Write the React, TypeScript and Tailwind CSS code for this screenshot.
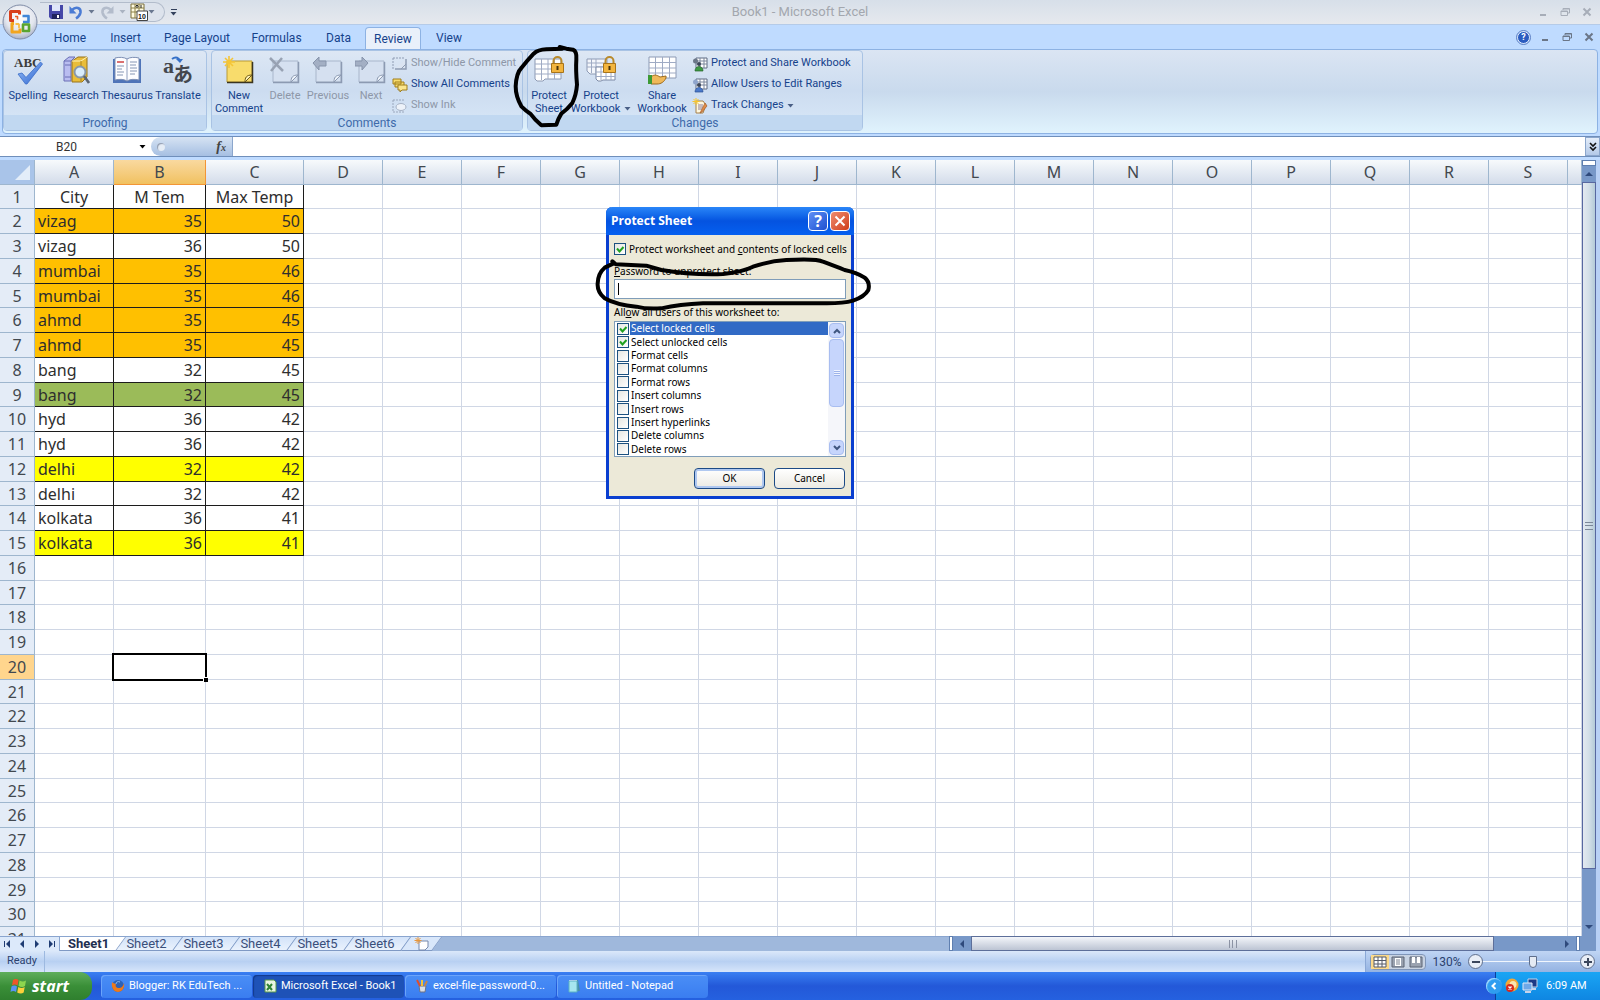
import type { ReactNode } from "react";
import clsx from "clsx";

const ribbonTabs = [
  { label: "Home", width: "w-14" },
  { label: "Insert", width: "w-[55px]" },
  { label: "Page Layout", width: "w-[88px]" },
  { label: "Formulas", width: "w-[71px]" },
  { label: "Data", width: "w-[53px]" },
  { label: "Review", width: "w-14", active: true },
  { label: "View", width: "w-14" },
];

const columns = "ABCDEFGHIJKLMNOPQRST".split("");

const records = [
  { city: "vizag", min: 35, max: 50, fill: "bg-[#ffc000]" },
  { city: "vizag", min: 36, max: 50, fill: "bg-white" },
  { city: "mumbai", min: 35, max: 46, fill: "bg-[#ffc000]" },
  { city: "mumbai", min: 35, max: 46, fill: "bg-[#ffc000]" },
  { city: "ahmd", min: 35, max: 45, fill: "bg-[#ffc000]" },
  { city: "ahmd", min: 35, max: 45, fill: "bg-[#ffc000]" },
  { city: "bang", min: 32, max: 45, fill: "bg-white" },
  { city: "bang", min: 32, max: 45, fill: "bg-[#9bbb59]" },
  { city: "hyd", min: 36, max: 42, fill: "bg-white" },
  { city: "hyd", min: 36, max: 42, fill: "bg-white" },
  { city: "delhi", min: 32, max: 42, fill: "bg-[#ffff00]" },
  { city: "delhi", min: 32, max: 42, fill: "bg-white" },
  { city: "kolkata", min: 36, max: 41, fill: "bg-white" },
  { city: "kolkata", min: 36, max: 41, fill: "bg-[#ffff00]" },
];

const permissions = [
  "Select locked cells",
  "Select unlocked cells",
  "Format cells",
  "Format columns",
  "Format rows",
  "Insert columns",
  "Insert rows",
  "Insert hyperlinks",
  "Delete columns",
  "Delete rows",
];

/* ---------- icons ---------- */

function OfficeOrb() {
  return (
    <svg viewBox="0 0 36 36" className="size-9">
      <defs>
        <radialGradient id="orb" cx="50%" cy="35%" r="65%">
          <stop offset="0" stopColor="#ffffff" />
          <stop offset="0.65" stopColor="#e3e6ee" />
          <stop offset="1" stopColor="#a9b2c6" />
        </radialGradient>
      </defs>
      <circle cx="18" cy="18" r="17" fill="url(#orb)" stroke="#7f8ba6" />
      <g fill="none" strokeLinejoin="round">
        <path d="M17.500 10.500V7.500H8.500V16.500H12" stroke="#d8401c" strokeWidth="3" />
        <path d="M13 12.500H15.500V15.500" stroke="#e8622c" strokeWidth="1.600" />
        <path d="M20.500 12H26.500V18H21" stroke="#3f86d8" strokeWidth="2.600" />
        <path d="M12 19.500H10V28H18V24.500" stroke="#f2a51e" strokeWidth="3" />
        <path d="M13.500 20H17V24" stroke="#f6bd4a" strokeWidth="1.800" />
        <path d="M21 20.500H27V27H21Z" stroke="#5aa52f" strokeWidth="2.600" />
      </g>
      <path d="M17 16.500h3v3h-3z" fill="#fff" />
    </svg>
  );
}

function SaveIcon() {
  return (
    <svg viewBox="0 0 16 16" className="size-4">
      <path d="M1 1h14v14H3l-2-2z" fill="#4547a8" />
      <path d="M4 1h8v6H4z" fill="#dfe6fa" />
      <path d="M4 10h8v5H4z" fill="#20245f" />
      <path d="M9 11h2v3H9z" fill="#fff" />
    </svg>
  );
}

function UndoIcon({ flip = false }: { flip?: boolean }) {
  return (
    <svg viewBox="0 0 16 16" className={clsx("size-4", flip && "-scale-x-100")}>
      <path
        d="M4 6c4-4 9-2 8.500 2.500C12 11 10.500 13 8 14.500"
        fill="none"
        stroke={flip ? "#b3bccb" : "#4a7bd4"}
        strokeWidth="2.600"
      />
      <path d="M1.500 2v7.500h7z" fill={flip ? "#b3bccb" : "#4a7bd4"} />
    </svg>
  );
}

function CalcSheetIcon() {
  return (
    <svg viewBox="0 0 18 18" className="size-[18px]">
      <path d="M1 1h13v14H1z" fill="#fffbe0" stroke="#7a6f3a" />
      <path d="M1 5h13M1 9h13M5 1v14M9 1v14" stroke="#8c8046" />
      <path d="M7 5V2M5.500 3.500L7 2l1.500 1.500M11 2v3" stroke="#222" fill="none" />
      <path d="M7 8h10.500v9.500H7z" fill="#fff" stroke="#444" />
      <text x="8" y="15.500" fontSize="7" fontWeight="700" fontFamily="Liberation Sans, sans-serif" fill="#111">
        10
      </text>
    </svg>
  );
}

function Caret({ className = "text-[#4a5f86]" }: { className?: string }) {
  return (
    <svg viewBox="0 0 7 4" className={clsx("h-1 w-[7px] shrink-0", className)}>
      <path d="M0.500 0h6l-3 3.500z" fill="currentColor" />
    </svg>
  );
}

function SpellingIcon() {
  return (
    <svg viewBox="0 0 32 32" className="size-8">
      <defs>
        <linearGradient id="tick" x1="0" y1="0" x2="1" y2="1">
          <stop offset="0" stopColor="#9cc2f8" />
          <stop offset="1" stopColor="#2a62cf" />
        </linearGradient>
      </defs>
      <text x="2" y="12" fontSize="13" fontWeight="700" fontFamily="Liberation Serif, serif" fill="#3c3c3c">
        ABC
      </text>
      <path d="M6 19l4-1 4 4.500L28.500 7l2 2L15 29h-1.500z" fill="url(#tick)" stroke="#3a6cc8" strokeWidth="0.800" />
    </svg>
  );
}

function ResearchIcon() {
  return (
    <svg viewBox="0 0 32 32" className="size-8">
      <path d="M4 6l5-4h6l-4 4v20H4z" fill="#b9bdf0" stroke="#6a6fb5" />
      <path d="M4 6h7M5 22h6M5 10h6" stroke="#6a6fb5" />
      <path d="M12 6l6-4h9v20l-5 5H12z" fill="#e9bd3a" stroke="#97721a" />
      <path d="M12 6h9l6-4" fill="none" stroke="#fff3b8" />
      <path d="M21 6v20" stroke="#a9821f" />
      <circle cx="20" cy="17" r="5.500" fill="#d9ecfb" stroke="#8797a8" strokeWidth="2" />
      <path d="M24 21l5 7" stroke="#5d6673" strokeWidth="2.600" />
    </svg>
  );
}

function ThesaurusIcon() {
  return (
    <svg viewBox="0 0 32 32" className="size-8">
      <path d="M2 4h28v24H2z" fill="#4f74b8" />
      <path d="M4 3c4-1 9-1 12 1 3-2 8-2 12-1v22c-4-1-9-1-12 1-3-2-8-2-12-1z" fill="#fdfdff" stroke="#7d8fb4" />
      <path d="M16 4v22" stroke="#8e9dbd" />
      <path d="M6 7h7" stroke="#c33" strokeWidth="1.400" />
      <path d="M6 11h7M6 14h5M6 17h7M6 20h6M19 7h7M19 10h6M19 13h7M19 16h7M19 19h5" stroke="#8696b4" />
    </svg>
  );
}

function TranslateIcon() {
  return (
    <svg viewBox="0 0 32 32" className="size-8">
      <text x="1" y="18" fontSize="22" fontWeight="700" fontFamily="Liberation Serif, serif" fill="#44474d">
        a
      </text>
      <text x="11" y="27" fontSize="20" fontWeight="700" fontFamily="Noto Sans CJK JP, sans-serif" fill="#44474d">
        あ
      </text>
      <path d="M10 4c4-3 7-1 8 2" fill="none" stroke="#3570c8" strokeWidth="2" />
      <path d="M14 4h7l-3 4z" fill="#3570c8" />
    </svg>
  );
}

function NoteIcon({ kind }: { kind: "new" | "delete" | "previous" | "next" }) {
  const fresh = kind === "new";
  return (
    <svg viewBox="0 0 32 32" className="size-8">
      <path
        d="M4 6h25v21H4z"
        fill={fresh ? "#f8dc6c" : "#d5e0f0"}
        stroke={fresh ? "#b99a35" : "#a9b6cb"}
      />
      <path d="M4 27.500h25.500V7" fill="none" stroke={fresh ? "#3a3420" : "#8c9ab2"} strokeWidth="1.500" />
      <path d="M22 27c0-4 1-7 7-7z" fill={fresh ? "#fff2b5" : "#eef3fa"} stroke={fresh ? "#6e5a18" : "#8c9ab2"} />
      {fresh && <path d="M6 1v12M0 7h12M2 3l8 8M10 3l-8 8" stroke="#f5c536" strokeWidth="1.600" />}
      {kind === "delete" && <path d="M1 3l13 13M13 3L2 16" stroke="#98a2b3" strokeWidth="2.500" />}
      {kind === "previous" && <path d="M1 8l6-6v4h7v5H7v4z" fill="#a3afc4" stroke="#8794ab" />}
      {kind === "next" && <path d="M13 8L7 2v4H0v5h7v4z" fill="#a3afc4" stroke="#8794ab" />}
    </svg>
  );
}

function Padlock() {
  return (
    <g>
      <path d="M20.500 9V6a4 4 0 0 1 8 0v3" fill="none" stroke="#b98a2b" strokeWidth="2" />
      <path d="M18.500 8.500h12v9h-12z" fill="#f3b53e" stroke="#a8741a" />
      <path d="M24.500 11v4" stroke="#4a3208" strokeWidth="2" />
    </g>
  );
}

function ProtectSheetIcon() {
  return (
    <svg viewBox="0 0 32 32" className="size-8">
      <path d="M2 4h26v20H12l-2 2H4l-2-2z" fill="#fff" stroke="#8d9ab4" />
      <path d="M2 9h26M2 14h26M2 19h26M8.500 4v21M15 4v20M21.500 4v20" stroke="#9fabc4" />
      <Padlock />
    </svg>
  );
}

function ProtectWorkbookIcon() {
  return (
    <svg viewBox="0 0 32 32" className="size-8">
      <path d="M2 4h20v15H5l-3-3z" fill="#f4f7fc" stroke="#8d9ab4" />
      <path d="M2 8h20M2 12h20M6.500 4v14M11 4v14" stroke="#9fabc4" />
      <path d="M11 12h19v13h-12l-2 1h-3l-2-2z" fill="#fff" stroke="#7c8aa6" />
      <path d="M11 17h19M11 21.500h19M16 12v13M21 12v13M26 12v13" stroke="#9fabc4" />
      <Padlock />
    </svg>
  );
}

function ShareWorkbookIcon() {
  return (
    <svg viewBox="0 0 32 32" className="size-8">
      <path d="M3 2h27v21H3z" fill="#fff" stroke="#8d9ab4" />
      <path d="M3 7.500h27M3 13h27M3 18h27M9.500 2v21M16.500 2v21M23.500 2v21" stroke="#9fabc4" />
      <path d="M5 22c3-3 6-2 9 0l6-1v2c-2 4-5 6-9 6H5z" fill="#f0b95a" stroke="#9c6a1c" />
      <path d="M2 20h4v9H2z" fill="#3d9a35" />
    </svg>
  );
}

function SmallIcon({ kind }: { kind: string }) {
  return (
    <svg viewBox="0 0 16 16" className="size-4 shrink-0">
      {kind === "hide" && (
        <>
          <path d="M1 2h12M1 2v11" stroke="#8f9cb3" strokeDasharray="2 1" fill="none" />
          <path d="M3 13h11V3" stroke="#8f9cb3" strokeWidth="1.500" fill="#dbe4f1" />
          <path d="M9 13l5-5" stroke="#8f9cb3" />
        </>
      )}
      {kind === "all" && (
        <>
          <path d="M1 2h8v5H1zM3 5h9v5H3z" fill="#f8dc6c" stroke="#a07f1c" />
          <path d="M6 8h9v5h-5l-2 2v-2H6z" fill="#fbe68e" stroke="#a07f1c" />
        </>
      )}
      {kind === "ink" && (
        <>
          <path d="M1 2h12M1 2v12M1 14h12" stroke="#9aa7bc" strokeDasharray="2 1" fill="none" />
          <ellipse cx="9" cy="9" rx="5" ry="3.500" fill="#edf2f9" stroke="#a6b2c5" />
        </>
      )}
      {(kind === "protect" || kind === "users") && (
        <>
          <path d="M4 2h11v10H4z" fill="#fff" stroke="#5f6b82" />
          <path d="M4 5h11M4 8h11M8 2v10M12 2v10" stroke="#7a869c" />
          <circle cx="3.500" cy="5" r="2.500" fill={kind === "users" ? "#8fa5cc" : "#6c7788"} />
          <circle cx="7" cy="8" r="2" fill="#3c4658" />
          <path
            d="M3 15c0-6 8-6 8 0z"
            fill={kind === "users" ? "#4a79c9" : "#3f9a44"}
            stroke={kind === "users" ? "#294f94" : "#226327"}
            strokeWidth="0.700"
          />
        </>
      )}
      {kind === "track" && (
        <>
          <path d="M4 3h7l3 4-3 8H4z" fill="#fff7dd" stroke="#a5804b" />
          <path d="M6 7h5M6 9h5M6 11h4" stroke="#8b7f9d" />
          <path d="M13 5l2 3-5 6-2 1z" fill="#e08c4a" stroke="#9a5421" strokeWidth="0.600" />
          <path d="M4 0v7M0.500 3.500h7M1.500 1l5 5M6.500 1l-5 5" stroke="#f7c52e" />
        </>
      )}
    </svg>
  );
}

function WindowControls({ className }: { className: string }) {
  return (
    <div className={clsx("flex items-center gap-3", className)}>
      <button aria-label="Minimize">
        <svg viewBox="0 0 10 10" className="size-2.5">
          <path d="M2 8h6" stroke="currentColor" strokeWidth="2" />
        </svg>
      </button>
      <button aria-label="Restore">
        <svg viewBox="0 0 10 10" className="size-2.5">
          <path d="M3 3V1.500h6.500V6H8M1 4h6.500v4.500H1zM3 2h6.500M1 4.500h6.500" fill="none" stroke="currentColor" />
        </svg>
      </button>
      <button aria-label="Close">
        <svg viewBox="0 0 10 10" className="size-2.5">
          <path d="M1.500 1.500l7 7M8.500 1.500l-7 7" stroke="currentColor" strokeWidth="2" />
        </svg>
      </button>
    </div>
  );
}

/* ---------- ribbon ---------- */

function RibbonGroup({ title, children, className }: { title: string; children: ReactNode; className: string }) {
  return (
    <section
      className={clsx(
        "flex flex-col rounded-sm border border-[#a9c3e4] bg-linear-to-b from-[#dde7f4] via-[#ccdcf0] to-[#d9e8f8]",
        className,
      )}
    >
      <div className="flex min-h-0 flex-1">{children}</div>
      <h2 className="h-[15px] shrink-0 bg-[#c1d8f1] text-center text-[12px] leading-4 text-[#3e6aaa]">{title}</h2>
    </section>
  );
}

function BigButton({
  icon,
  lines,
  width,
  disabled,
  caret,
}: {
  icon: ReactNode;
  lines: string[];
  width: string;
  disabled?: boolean;
  caret?: boolean;
}) {
  return (
    <button
      disabled={disabled}
      className={clsx(
        "flex shrink-0 flex-col items-center pt-1 text-[11px] leading-[13px] whitespace-nowrap",
        disabled ? "text-[#8d97a8]" : "text-[#15428b]",
        width,
      )}
    >
      {icon}
      <span className="mt-0.5">{lines[0]}</span>
      {lines[1] && (
        <span className="flex items-center gap-1">
          {lines[1]}
          {caret && <Caret />}
        </span>
      )}
    </button>
  );
}

function SmallButton({ kind, label, disabled, caret }: { kind: string; label: string; disabled?: boolean; caret?: boolean }) {
  return (
    <button
      disabled={disabled}
      className={clsx(
        "flex h-[21px] items-center gap-[3px] text-[11px] whitespace-nowrap",
        disabled ? "text-[#8d97a8]" : "text-[#15428b]",
      )}
    >
      <SmallIcon kind={kind} />
      {label}
      {caret && <Caret className="text-[#4a5f86]" />}
    </button>
  );
}

function Ribbon() {
  return (
    <div className="mx-0.5 flex h-[85px] gap-1 rounded border border-[#8db2e3] bg-linear-to-b from-[#dbe5f3] via-[#c9daed] to-[#e0f3fd] pb-0.5">
      <RibbonGroup title="Proofing" className="w-[204px]">
        <BigButton icon={<SpellingIcon />} lines={["Spelling"]} width="w-12" />
        <BigButton icon={<ResearchIcon />} lines={["Research"]} width="w-12" />
        <BigButton icon={<ThesaurusIcon />} lines={["Thesaurus"]} width="w-[54px]" />
        <BigButton icon={<TranslateIcon />} lines={["Translate"]} width="w-12" />
      </RibbonGroup>
      <RibbonGroup title="Comments" className="w-[312px]">
        <BigButton icon={<NoteIcon kind="new" />} lines={["New", "Comment"]} width="w-[54px]" />
        <BigButton icon={<NoteIcon kind="delete" />} lines={["Delete"]} width="w-[38px]" disabled />
        <BigButton icon={<NoteIcon kind="previous" />} lines={["Previous"]} width="w-12" disabled />
        <BigButton icon={<NoteIcon kind="next" />} lines={["Next"]} width="w-[38px]" disabled />
        <div className="pt-0.5 pl-0.5">
          <SmallButton kind="hide" label="Show/Hide Comment" disabled />
          <SmallButton kind="all" label="Show All Comments" />
          <SmallButton kind="ink" label="Show Ink" disabled />
        </div>
      </RibbonGroup>
      <RibbonGroup title="Changes" className="w-[336px]">
        <BigButton icon={<ProtectSheetIcon />} lines={["Protect", "Sheet"]} width="w-[42px]" />
        <BigButton icon={<ProtectWorkbookIcon />} lines={["Protect", "Workbook"]} width="w-[62px]" caret />
        <BigButton icon={<ShareWorkbookIcon />} lines={["Share", "Workbook"]} width="w-[60px]" />
        <div className="pt-0.5">
          <SmallButton kind="protect" label="Protect and Share Workbook" />
          <SmallButton kind="users" label="Allow Users to Edit Ranges" />
          <SmallButton kind="track" label="Track Changes" caret />
        </div>
      </RibbonGroup>
    </div>
  );
}

function TitleAndTabs() {
  return (
    <header className="relative">
      <div className="relative flex h-[25px] items-center border-b border-[#b5cbe8] bg-linear-to-b from-[#d7dfe9] to-[#e6e9ee]">
        <div className="ml-10 flex h-5 w-[125px] items-center gap-1 rounded-r-full border border-l-0 border-[#b2bccb] bg-[#dde3ec] pl-2">
          <button aria-label="Save"><SaveIcon /></button>
          <button aria-label="Undo" className="flex items-center gap-1"><UndoIcon /><Caret className="text-[#6a7890]" /></button>
          <button aria-label="Redo" className="flex items-center gap-1"><UndoIcon flip /><Caret className="text-[#aab3c1]" /></button>
          <button aria-label="Calculation options" className="flex items-center"><CalcSheetIcon /><Caret className="text-[#6a7890]" /></button>
        </div>
        <button aria-label="Customize Quick Access Toolbar" className="ml-[5px] flex flex-col items-center gap-0.5">
          <span className="h-px w-1.5 bg-[#33415c]" />
          <Caret className="text-[#33415c]" />
        </button>
        <h1 className="absolute inset-x-0 text-center text-[13px] leading-7 text-[#a3a7ae]">Book1 - Microsoft Excel</h1>
        <WindowControls className="absolute right-2 text-[#a7adb8]" />
      </div>
      <nav className="flex h-6 items-end bg-[#bfdbff] pl-[42px] text-[12px] text-[#15428b]">
        {ribbonTabs.map((tab) => (
          <button
            key={tab.label}
            className={clsx(
              "h-[22px] text-center whitespace-nowrap",
              tab.width,
              tab.active && "rounded-t border border-b-0 border-[#8db2e3] bg-[#e9f0fa]",
            )}
          >
            {tab.label}
          </button>
        ))}
        <div className="ml-auto flex h-full items-center gap-2.5 pr-1.5">
          <button aria-label="Help" className="grid size-[13px] place-items-center rounded-full border border-[#e9f2ff] bg-[#2b5cc0] text-[9px] leading-none font-bold text-white outline outline-[#5b7fc4]">
            ?
          </button>
          <WindowControls className="text-[#6b7687]" />
        </div>
      </nav>
      <button aria-label="Office Button" className="absolute top-1 left-0.5">
        <OfficeOrb />
      </button>
    </header>
  );
}

function FormulaBar() {
  return (
    <div className="mt-0.5 flex h-[21px] border-y border-[#6f8fbb] bg-white">
      <input aria-label="Name Box" defaultValue="B20" className="w-[133px] text-center text-[12px] text-[#333] outline-none" />
      <button aria-label="Name list" className="grid w-[18px] place-items-center">
        <Caret className="text-black" />
      </button>
      <div className="flex w-[82px] items-center justify-between rounded-l-full border-r border-[#8ba6cc] bg-linear-to-b from-[#d6e3f3] to-[#a6bfe2] pr-1.5 pl-1.5">
        <span className="size-2 rounded-full bg-[#e6edf6] shadow-[inset_1px_1px_1px_#8f9bb0]" />
        <button aria-label="Insert Function" className="font-['Liberation_Serif',serif] text-[14px] leading-none font-bold text-[#444] italic">
          f<span className="text-[10px]">x</span>
        </button>
      </div>
      <input aria-label="Formula Bar" className="min-w-0 flex-1 outline-none" />
      <button aria-label="Expand Formula Bar" className="grid w-[15px] place-items-center border border-[#8ba6cc] bg-linear-to-b from-[#e4edf9] to-[#b3c9e8]">
        <svg viewBox="0 0 8 10" className="h-2.5 w-2">
          <path d="M1 1l3 3 3-3M1 5l3 3 3-3" fill="none" stroke="#111" strokeWidth="1.600" />
        </svg>
      </button>
    </div>
  );
}

/* ---------- worksheet ---------- */

function Worksheet() {
  return (
    <div className="min-h-0 flex-1 overflow-hidden bg-white">
      <table className="w-full table-fixed border-separate border-spacing-0 font-['Noto_Sans',sans-serif] text-[16px] leading-5 text-[#2e2e2e]">
        <colgroup>
          <col className="w-[35px]" />
          <col className="w-[79px]" />
          <col className="w-[92px]" />
          <col className="w-[98px]" />
          {columns.slice(3, -1).map((name) => (
            <col key={name} className="w-[79px]" />
          ))}
          <col />
        </colgroup>
        <thead>
          <tr className="h-[25px]">
            <th className="border-r border-b border-[#9eb6ce] bg-[#a9c4e9] p-0">
              <svg viewBox="0 0 34 24" className="h-6 w-full">
                <path d="M30 5v15H15z" fill="#e3edf9" />
              </svg>
            </th>
            {columns.map((name) => (
              <th
                key={name}
                className={clsx(
                  "border-r border-b p-0 font-normal text-[#42484f]",
                  name === "B"
                    ? "border-[#f29536] bg-linear-to-b from-[#f9d99f] to-[#f1c15f]"
                    : "border-[#9eb6ce] bg-linear-to-b from-[#f7fafc] to-[#d3dcea]",
                )}
              >
                {name !== "T" && name}
              </th>
            ))}
          </tr>
        </thead>
        <tbody>
          {Array.from({ length: 31 }, (_, i) => {
            const row = i + 1;
            const record = records[i - 1];
            const values = row === 1 ? ["City", "M Tem", "Max Temp"] : record ? [record.city, record.min, record.max] : [];
            return (
              <tr key={row} className={i % 4 === 0 ? "h-6" : "h-[25px]"}>
                <th
                  className={clsx(
                    "border-r border-b border-[#9eb6ce] p-0 font-normal text-[#42484f]",
                    row === 20 ? "bg-[#ffd58d]" : "bg-[#e4ecf7]",
                  )}
                >
                  {row}
                </th>
                {columns.map((name, c) => {
                  const inTable = row <= 15 && c < 3;
                  return (
                    <td
                      key={name}
                      className={clsx(
                        "border-r border-b px-[3px] py-0",
                        inTable ? "border-[#1c1c1c]" : "border-[#d0d7e5]",
                        inTable && record?.fill,
                        row === 1 ? "text-center" : c > 0 && "text-right",
                        row === 20 && name === "B" && "relative",
                      )}
                    >
                      {c < 3 && values[c]}
                      {row === 20 && name === "B" && (
                        <span className="absolute -top-0.5 -right-0.5 -bottom-0.5 -left-0.5 border-[2px] border-black">
                          <span className="absolute -right-[3px] -bottom-[3px] size-[5px] border-t border-l border-white bg-black" />
                        </span>
                      )}
                    </td>
                  );
                })}
              </tr>
            );
          })}
        </tbody>
      </table>
    </div>
  );
}

function Triangle({ d }: { d: string }) {
  return (
    <svg viewBox="0 0 8 8" className="size-2 shrink-0">
      <path d={d} fill="currentColor" />
    </svg>
  );
}

function SheetTabs() {
  return (
    <div className="flex h-[15px] bg-[#9fb8dc]">
      <div className="flex min-w-0 flex-[3] border-t border-[#8aa5cf]">
        <div className="relative z-10 flex w-[60px] items-center justify-around border-r border-[#8aa5cf] bg-[#dce9fa] text-[#1f3c73]">
          <button aria-label="First sheet"><Triangle d="M1 1h1v6H1zM7 0v8L3 4z" /></button>
          <button aria-label="Previous sheet"><Triangle d="M6 0v8L2 4z" /></button>
          <button aria-label="Next sheet"><Triangle d="M2 0v8l4-4z" /></button>
          <button aria-label="Last sheet"><Triangle d="M1 0v8l4-4zM6 1h1v6H6z" /></button>
        </div>
        {["Sheet1", "Sheet2", "Sheet3", "Sheet4", "Sheet5", "Sheet6"].map((name, i) => (
          <button
            key={name}
            className={clsx(
              "relative text-[13px] leading-[14px]",
              i === 0 ? "w-[61px] pr-1 font-bold text-[#1f2f50]" : "w-[57px] pr-1.5 text-[#3a4f7a]",
            )}
          >
            <span
              className={clsx(
                "absolute inset-y-0 right-0 -skew-x-[36deg] border-r border-b border-[#7f99c4]",
                i === 0 ? "-left-2 bg-white" : "left-0 bg-linear-to-b from-[#d3e3f9] to-[#eaf2fd]",
              )}
            />
            <span className="relative">{name}</span>
          </button>
        ))}
        <button aria-label="Insert Worksheet" className="relative grid w-[31px] place-items-center">
          <span className="absolute inset-0 -skew-x-[36deg] border-r border-b border-[#7f99c4] bg-[#d9e7fa]" />
          <svg viewBox="0 0 16 14" className="relative h-3.5 w-4">
            <path d="M5 4h9v6l-3 3H5z" fill="#fff" stroke="#7688ab" />
            <path d="M4 0v7M0.500 3.500h7M1.500 1l5 5M6.500 1l-5 5" stroke="#e8963a" />
          </svg>
        </button>
      </div>
      <div className="flex min-w-0 flex-[2] items-stretch bg-[#7898c8] text-[#2f4a7c]">
        <span className="w-1 border border-[#5f7fb0] bg-white" />
        <button aria-label="Scroll left" className="grid w-[18px] place-items-center"><Triangle d="M6 0v8L2 4z" /></button>
        <div className="grid flex-1 place-items-center border border-[#5d6f9a] bg-linear-to-b from-[#f4f6fa] to-[#bcc4d3]">
          <span className="h-2 w-2 border-x border-[#8c93a4] bg-[linear-gradient(90deg,transparent_2px,#8c93a4_2px,#8c93a4_3px,transparent_3px)]" />
        </div>
        <span className="w-16" />
        <button aria-label="Scroll right" className="grid w-[18px] place-items-center"><Triangle d="M2 0v8l4-4z" /></button>
        <span className="mr-0.5 w-1 border border-[#5f7fb0] bg-white" />
      </div>
    </div>
  );
}

function VerticalScroll() {
  return (
    <div className="flex w-[14px] flex-col items-stretch bg-[#7898c8] text-[#2f4a7c]">
      <span className="h-1.5 border border-[#5f7fb0] bg-white" />
      <button aria-label="Scroll up" className="grid h-4 place-items-center"><Triangle d="M0 6h8L4 2z" /></button>
      <div className="grid flex-1 place-items-center border border-[#5868a0] bg-linear-to-r from-[#e3e9f0] via-[#d3dfe8] to-[#b4cbd8]">
        <span className="h-2 w-2 border-y border-[#7d8899] bg-[linear-gradient(transparent_2px,#7d8899_2px,#7d8899_3px,transparent_3px)]" />
      </div>
      <span className="h-[50px]" />
      <button aria-label="Scroll down" className="mb-4 grid h-4 place-items-center"><Triangle d="M0 2h8L4 6z" /></button>
    </div>
  );
}

function StatusBar() {
  return (
    <footer className="flex h-[21px] items-center bg-linear-to-b from-[#dbe8fa] via-[#b8d0f2] to-[#d6e5fa] text-[11px] text-[#2b416e]">
      <span className="flex h-full w-[45px] items-center border-r border-[#9db9e0] pl-[7px]">Ready</span>
      <div className="ml-auto flex h-full items-center border-l border-[#8aa8d6] bg-linear-to-b from-[#c0d5f4] to-[#94b3e2] pr-[5px] pl-1">
        <div className="flex h-4 rounded-sm border border-[#7f95b8] bg-[#c7d2e2]">
          <button aria-label="Normal" className="grid w-[18px] place-items-center bg-[#fbd98a]">
            <svg viewBox="0 0 14 12" className="h-3 w-3.5">
              <path d="M1 1h12v10H1zM1 4.500h12M1 8h12M5 1v10M9 1v10" fill="#fff" stroke="#555b68" />
            </svg>
          </button>
          <button aria-label="Page Layout" className="grid w-[18px] place-items-center">
            <svg viewBox="0 0 14 12" className="h-3 w-3.5">
              <path d="M1 1h12v10H1z" fill="#9aa2b0" stroke="#5d6575" />
              <path d="M4 2h6v8H4z" fill="#fff" />
              <path d="M5 4h4M5 6h4M5 8h4" stroke="#7a8291" />
            </svg>
          </button>
          <button aria-label="Page Break Preview" className="grid w-[18px] place-items-center">
            <svg viewBox="0 0 14 12" className="h-3 w-3.5">
              <path d="M1 1h12v10H1z" fill="#9aa2b0" stroke="#5d6575" />
              <path d="M3 1h3v6H3zM8 1h3v6H8z" fill="#fff" />
            </svg>
          </button>
        </div>
        <button className="w-[42px] text-center text-[12px]">130%</button>
        <button aria-label="Zoom out" className="grid size-[15px] place-items-center rounded-full border border-[#5f6f8d] bg-[#e9eef6]">
          <span className="h-0.5 w-2 bg-[#3c475c]" />
        </button>
        <input
          type="range"
          aria-label="Zoom"
          min={0}
          max={100}
          defaultValue={52}
          className="h-4 w-[97px] appearance-none bg-[linear-gradient(#f1f6fd,#f1f6fd)] bg-[length:100%_1px] bg-center bg-no-repeat [&::-webkit-slider-thumb]:h-3 [&::-webkit-slider-thumb]:w-2 [&::-webkit-slider-thumb]:appearance-none [&::-webkit-slider-thumb]:rounded-b [&::-webkit-slider-thumb]:border [&::-webkit-slider-thumb]:border-[#5f6f8d] [&::-webkit-slider-thumb]:bg-[#e4eaf3]"
        />
        <button aria-label="Zoom in" className="grid size-[15px] place-items-center rounded-full border border-[#5f6f8d] bg-[#e9eef6]">
          <svg viewBox="0 0 8 8" className="size-2">
            <path d="M4 0v8M0 4h8" stroke="#3c475c" strokeWidth="2" />
          </svg>
        </button>
      </div>
    </footer>
  );
}

/* ---------- dialog ---------- */

function CheckBox({ id, checked, className }: { id: string; checked: boolean; className: string }) {
  return (
    <span className={clsx("relative shrink-0", className)}>
      <input
        id={id}
        type="checkbox"
        defaultChecked={checked}
        className="peer block size-full appearance-none border border-[#1c5180] bg-linear-to-br from-[#e6e6e1] to-white"
      />
      <svg viewBox="0 0 12 12" className="pointer-events-none absolute inset-0 hidden size-full peer-checked:block">
        <path d="M3 5.500l2.500 3L9.500 4" fill="none" stroke="#21a121" strokeWidth="2" />
      </svg>
    </span>
  );
}

function ScrollArrow({ label, d }: { label: string; d: string }) {
  return (
    <button aria-label={label} className="grid h-[15px] place-items-center rounded-sm border border-[#a8bdf0] bg-[#c6d5fc]">
      <svg viewBox="0 0 8 6" className="h-1.5 w-2">
        <path d={d} fill="none" stroke="#3f567f" strokeWidth="2" />
      </svg>
    </button>
  );
}

function ProtectSheetDialog() {
  return (
    <div
      role="dialog"
      aria-labelledby="dialog-title"
      className="absolute top-[207px] left-[606px] w-[248px] rounded-t-md border-[3px] border-t-0 border-[#0a3fd0] bg-[#ece9d8] font-['Noto_Sans',sans-serif] text-[10px] text-black"
    >
      <div className="-mx-[3px] flex h-7 items-center gap-0.5 rounded-t-md bg-linear-to-b from-[#2a86f8] via-[#0553e0] to-[#0560f0] pr-1 pl-[5px]">
        <h2 id="dialog-title" className="mr-auto font-['Open_Sans',sans-serif] text-[12px] font-bold text-white">Protect Sheet</h2>
        <button aria-label="Help" className="grid size-5 place-items-center rounded-sm border border-white bg-linear-to-br from-[#5d8ef5] to-[#2050d0] text-[16px] leading-none font-bold text-white">
          ?
        </button>
        <button aria-label="Close" className="grid size-5 place-items-center rounded-sm border border-white bg-linear-to-br from-[#ee8b6d] to-[#cf3a12]">
          <svg viewBox="0 0 12 12" className="size-3">
            <path d="M1.500 1.500l9 9M10.500 1.500l-9 9" stroke="#fff" strokeWidth="2" />
          </svg>
        </button>
      </div>
      <div className="flex flex-col px-[5px] pt-[7px] pb-[7px]">
        <label htmlFor="protect-contents" className="flex h-3.5 items-center gap-[3px] whitespace-nowrap">
          <CheckBox id="protect-contents" checked className="size-3" />
          <span>Protect worksheet and <u>c</u>ontents of locked cells</span>
        </label>
        <label htmlFor="password" className="mt-[7px] h-4 leading-4"><u>P</u>assword to unprotect sheet:</label>
        <div className="flex h-5 items-center border border-[#7f9db9] bg-white pl-[3px]">
          <span className="h-3 w-px bg-black" />
          <input id="password" type="password" className="min-w-0 flex-1 outline-none" />
        </div>
        <span className="mt-[5px] h-4 leading-4">All<u>o</u>w all users of this worksheet to:</span>
        <div className="mt-px flex h-[136px] border border-[#7f9db9] bg-white">
          <ul className="flex min-w-0 flex-1 flex-col">
            {permissions.map((name, i) => (
              <li key={name} className="flex min-h-0 flex-1">
                <label htmlFor={`perm-${i}`} className="flex flex-1 items-center gap-px pl-0.5 leading-[13px] whitespace-nowrap">
                  <CheckBox id={`perm-${i}`} checked={i < 2} className="size-3" />
                  <span className={clsx("flex-1 pl-px", i === 0 && "bg-[#316ac5] text-white")}>{name}</span>
                </label>
              </li>
            ))}
          </ul>
          <div className="flex w-[17px] flex-col bg-[#f5f6fa] p-px">
            <ScrollArrow label="Scroll list up" d="M1 5l3-3 3 3" />
            <div className="my-px grid h-[68px] place-items-center rounded-sm border border-[#a8bdf0] bg-[#c6d5fc]">
              <span className="h-1.5 w-1.5 bg-[repeating-linear-gradient(#eef3ff_0_1px,#9db3ea_1px_2px)]" />
            </div>
            <span className="flex-1" />
            <ScrollArrow label="Scroll list down" d="M1 1l3 3 3-3" />
          </div>
        </div>
        <div className="mt-[11px] flex justify-end gap-[9px] pr-px">
          <button className="h-[21px] w-[71px] rounded-sm border border-[#1c4a86] bg-linear-to-b from-white to-[#eceae3] shadow-[inset_0_0_0_2px_#b0c8f0]">
            OK
          </button>
          <button className="h-[21px] w-[71px] rounded-sm border border-[#1c4a86] bg-linear-to-b from-white to-[#eceae3]">
            Cancel
          </button>
        </div>
      </div>
    </div>
  );
}

/* Freehand marker strokes drawn over the window */
function PenMarks() {
  return (
    <>
      <svg viewBox="400 130 201 258" className="pointer-events-none absolute top-[43px] left-[513px] h-[86px] w-[67px]">
        <path
          d="M540 142L560 147L580 150Q592 155 590 180Q588 210 592 255Q590 285 578 310Q562 330 545 342Q535 358 530 375L485 377Q465 360 452 342Q440 335 425 320Q408 290 408 260Q410 220 425 205Q445 180 462 162Q475 150 500 149L548 147"
          fill="none"
          stroke="#000"
          strokeWidth="12"
          strokeLinecap="round"
          strokeLinejoin="round"
        />
      </svg>
      <svg viewBox="10 180 840 180" className="pointer-events-none absolute top-[255px] left-[593px] h-[60px] w-[280px]">
        <path
          d="M68 199L78 208L170 212L215 225Q300 240 400 237Q460 230 490 215Q540 198 590 195Q680 190 700 200Q740 215 765 225Q800 232 825 248Q842 262 836 285Q825 305 790 317Q760 326 700 325L340 325Q270 328 215 340Q170 343 140 335Q80 330 45 310Q22 290 24 265Q25 235 45 218L72 205"
          fill="none"
          stroke="#000"
          strokeWidth="12"
          strokeLinecap="round"
          strokeLinejoin="round"
        />
      </svg>
    </>
  );
}

/* ---------- taskbar ---------- */

function TaskButton({ icon, label, active }: { icon: ReactNode; label: string; active?: boolean }) {
  return (
    <button
      className={clsx(
        "flex h-[23px] w-[151px] items-center gap-1 rounded-sm pl-2.5 text-[11px] whitespace-nowrap text-white",
        active
          ? "bg-[#1e52b7] shadow-[inset_1px_1px_1px_#123a8c]"
          : "bg-linear-to-b from-[#4a8ef6] to-[#3a7df0] shadow-[inset_1px_1px_0_#6ba4fa]",
      )}
    >
      {icon}
      {label}
    </button>
  );
}

function Taskbar() {
  return (
    <div className="flex h-7 items-center bg-linear-to-b from-[#3a7ff2] via-[#2358d8] to-[#2561e0]">
      <button className="mr-[9px] flex h-full w-[92px] items-center gap-1 rounded-r-xl bg-linear-to-b from-[#5fae5c] via-[#3a8f38] to-[#2f7f2e] pl-2.5 font-['Noto_Sans',sans-serif] text-[16px] font-bold text-white italic">
        <svg viewBox="0 0 18 18" className="size-[18px]">
          <path d="M3 3c2-1.500 4-1 5.500 0L7.500 8.500C6 7.500 4 7 2 8.500z" fill="#f0562a" />
          <path d="M9.500 3.500c2 1 4 1.500 6.500 0L15 9c-2 1.500-4.500 1-6.500 0z" fill="#8cd64e" />
          <path d="M1.500 9.500c2-1.500 4-1 5.500 0L6 15c-1.500-1-3.500-1.500-5.500 0z" fill="#5a93f5" />
          <path d="M8.300 10c2 1 4 1.500 6.400 0l-1 5.500c-2 1.500-4.500 1-6.500 0z" fill="#fbd03a" />
        </svg>
        start
      </button>
      <div className="flex gap-px">
        <TaskButton
          label="Blogger: RK EduTech ..."
          icon={
            <svg viewBox="0 0 14 14" className="size-3.5">
              <circle cx="7" cy="7" r="6" fill="#2d62b8" />
              <path d="M1 3c-1 6 2 10 6 10s7-4 6-9c-1 4-3 5-5 5-3 0-4-2-3-4L2 4z" fill="#ee7a1c" />
              <path d="M5 5c0-2 2-3 4-2" stroke="#8fc0f0" fill="none" />
            </svg>
          }
        />
        <TaskButton
          active
          label="Microsoft Excel - Book1"
          icon={
            <svg viewBox="0 0 14 14" className="size-3.5">
              <path d="M2 1h9l2 2v10H2z" fill="#e9f5e2" stroke="#57964c" />
              <path d="M4 5l5 6M9 5l-5 6" stroke="#2f8434" strokeWidth="2" />
            </svg>
          }
        />
        <TaskButton
          label="excel-file-password-0..."
          icon={
            <svg viewBox="0 0 14 14" className="size-3.5">
              <path d="M4 7h7l-1 6H5z" fill="#d9dde6" stroke="#6b7186" />
              <path d="M5 7L2 1" stroke="#e04e2c" strokeWidth="2" />
              <path d="M7 7V1" stroke="#f1c339" strokeWidth="2" />
              <path d="M9.500 7L12 2" stroke="#c98546" strokeWidth="2" />
            </svg>
          }
        />
        <TaskButton
          label="Untitled - Notepad"
          icon={
            <svg viewBox="0 0 14 14" className="size-3.5">
              <path d="M3 2l8-1 2 11-9 1z" fill="#4a90a8" />
              <path d="M2 2h8v11H2z" fill="#a6e6ef" stroke="#5bb2c4" />
              <path d="M3 2v-1M5 2v-1M7 2v-1M9 2v-1" stroke="#fff" />
            </svg>
          }
        />
      </div>
      <div className="relative ml-auto flex h-full w-[105px] items-center gap-0.5 border-l border-[#0a3f9a] bg-linear-to-b from-[#1aa5f4] to-[#0f86e2] pl-2 text-white">
        <button aria-label="Show hidden icons" className="absolute -left-2.5 grid size-4 place-items-center rounded-full bg-[#2f9df0] shadow-[inset_1px_1px_1px_#a9dcff]">
          <svg viewBox="0 0 8 8" className="size-2">
            <path d="M5.500 1L2.500 4l3 3" fill="none" stroke="#fff" strokeWidth="2" />
          </svg>
        </button>
        <svg viewBox="0 0 16 16" className="size-4">
          <circle cx="8" cy="7" r="6.500" fill="#f2a836" />
          <circle cx="9" cy="6.500" r="3.500" fill="#fce6b0" />
          <circle cx="6" cy="10" r="4" fill="#d9291c" />
          <path d="M4.500 8.500l3 3M7.500 8.500l-3 3" stroke="#fff" strokeWidth="1.400" />
        </svg>
        <svg viewBox="0 0 16 16" className="size-4">
          <path d="M6 1h9v8H6z" fill="#1c3a86" stroke="#c6d3ea" />
          <path d="M1 5h9v7H1z" fill="#6fa8e8" stroke="#dfe8f6" />
          <path d="M3 14h6M10 11h4" stroke="#c6d3ea" strokeWidth="2" />
        </svg>
        <time className="ml-1.5 text-[11px] whitespace-nowrap">6:09 AM</time>
      </div>
    </div>
  );
}

export default function App() {
  return (
    <div className="relative flex h-screen flex-col overflow-hidden bg-[#bfdbff] font-['Roboto',sans-serif]">
      <TitleAndTabs />
      <Ribbon />
      <FormulaBar />
      <main className="mt-[3px] flex min-h-0 flex-1">
        <div className="flex min-w-0 flex-1 flex-col">
          <Worksheet />
          <SheetTabs />
        </div>
        <VerticalScroll />
        <div className="w-1 bg-[#b8d0f5]" />
      </main>
      <StatusBar />
      <Taskbar />
      <ProtectSheetDialog />
      <PenMarks />
    </div>
  );
}
